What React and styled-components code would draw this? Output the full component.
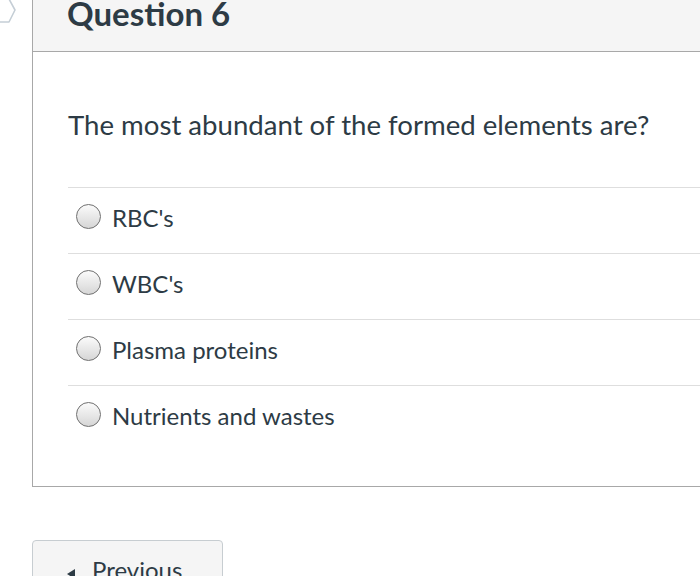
import React from 'react'
import styled, { createGlobalStyle } from 'styled-components'

const GlobalStyle = createGlobalStyle`
  html, body {
    margin: 0;
    padding: 0;
    background: #fff;
    overflow: hidden;
  }
  body {
    font-family: Lato, "Liberation Sans", sans-serif;
    color: #2d3b45;
  }
`

const options = ["RBC's", "WBC's", 'Plasma proteins', 'Nutrients and wastes']

function App() {
  return (
    <>
      <GlobalStyle />
      <PageStyled>
        <Gutter>
          <svg width="32" height="30" viewBox="0 0 32 30">
            <path
              d="M-2 -1 L9 -1 L15 10 L9 22 L-2 22"
              fill="none"
              stroke="#c5ced6"
              strokeWidth="1.6"
              strokeLinejoin="round"
            />
          </svg>
        </Gutter>
        <Main>
          <Card>
            <Header>
              <Title>Question 6</Title>
            </Header>
            <Body>
              <QuestionText>The most abundant of the formed elements are?</QuestionText>
              <Answers>
                {options.map(opt => (
                  <Answer key={opt}>
                    <Radio />
                    <span>{opt}</span>
                  </Answer>
                ))}
              </Answers>
            </Body>
          </Card>
          <PrevButton>
            <Arrow />
            Previous
          </PrevButton>
        </Main>
      </PageStyled>
    </>
  )
}

const PageStyled = styled.div`
  display: flex;
  width: 700px;
  height: 576px;
  overflow: hidden;
`

const Gutter = styled.div`
  flex: 0 0 32px;
  svg {
    display: block;
  }
`

const Main = styled.div`
  flex: 1;
  display: flex;
  flex-direction: column;
  align-items: flex-start;
`

const Card = styled.div`
  width: 720px;
  border-left: 1px solid #a8a8a8;
  border-bottom: 1px solid #a8a8a8;
  box-sizing: border-box;
`

const Header = styled.div`
  height: 51px;
  background: #f5f5f5;
  border-bottom: 1px solid #a8a8a8;
  padding-left: 34px;
  overflow: hidden;
`

const Title = styled.h2`
  margin: -7px 0 0;
  font-size: 33px;
  font-weight: 700;
  line-height: 40px;
  color: #2d3b45;
`

const Body = styled.div`
  padding: 0 0 35px 35px;
`

const QuestionText = styled.p`
  margin: 0;
  padding-top: 56px;
  height: 79px;
  font-size: 27.6px;
  line-height: 34px;
  color: #2d3b45;
`

const Answers = styled.div`
  display: flex;
  flex-direction: column;
`

const Answer = styled.label`
  display: flex;
  align-items: center;
  gap: 11px;
  height: 65px;
  border-top: 1px solid #dedede;
  padding-left: 8px;
  font-size: 24px;
  color: #2d3b45;
  span {
    position: relative;
    top: -3px;
  }
`

const Radio = styled.span`
  width: 25px;
  height: 25px;
  margin-top: -3px;
  border-radius: 50%;
  border: 1.5px solid #707070;
  box-sizing: border-box;
  background: linear-gradient(#fbfbfb, #d6d6d6);
  flex-shrink: 0;
`

const PrevButton = styled.button`
  margin-top: 53px;
  width: 191px;
  height: 60px;
  display: flex;
  align-items: flex-start;
  padding: 15px 0 0 34px;
  gap: 17px;
  background: #f5f5f5;
  border: 1px solid #c7cdd1;
  border-radius: 4px;
  font-family: Lato, "Liberation Sans", sans-serif;
  font-size: 24px;
  color: #2d3b45;
  line-height: 28px;
`

const Arrow = styled.span`
  margin-top: 13px;
  width: 0;
  height: 0;
  border-top: 5px solid transparent;
  border-bottom: 5px solid transparent;
  border-right: 8px solid #2d3b45;
`

export default App
